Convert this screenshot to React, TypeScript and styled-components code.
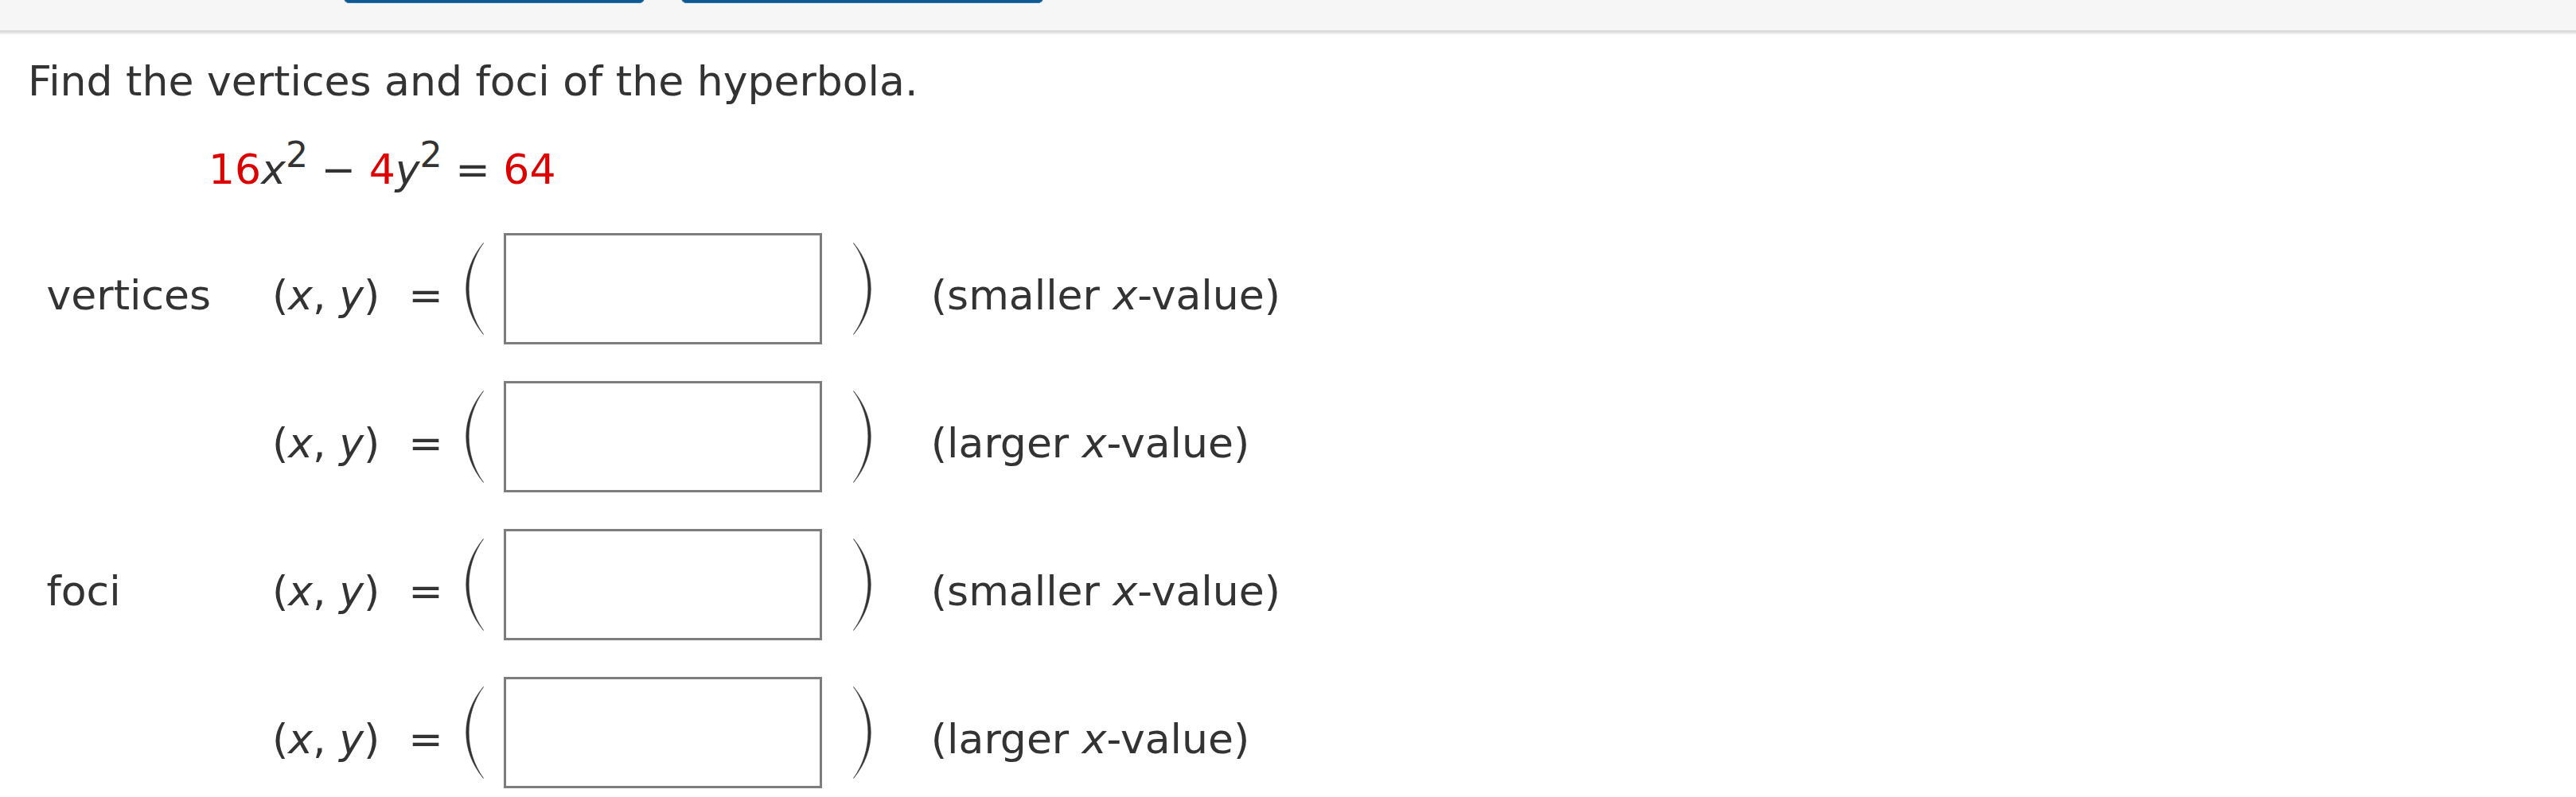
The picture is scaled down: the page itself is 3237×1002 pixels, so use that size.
import { FC } from "react";
import styled, { createGlobalStyle } from "styled-components";

const GlobalStyle = createGlobalStyle`
  html, body {
    margin: 0;
    padding: 0;
    background: #ffffff;
  }
  body {
    font-family: "DejaVu Sans", Verdana, sans-serif;
    color: #333333;
  }
`;

const TopBar = styled("div")`
  height: 38px;
  background: #f6f6f6;
  border-bottom: 3px solid #dcdcdc;
  box-shadow: 0 2px 0 #ececec;
  display: flex;
  align-items: flex-start;
  gap: 46px;
  padding-left: 432px;
  overflow: hidden;
`;

const TabButton = styled("div")<{ $w: number }>`
  width: ${({ $w }) => $w}px;
  height: 14px;
  margin-top: -10px;
  border-radius: 10px;
  background: #0d5a92;
  box-shadow: inset 0 -1px 0 #2f79b0;
`;

const Content = styled("div")`
  padding: 30px 0 0 35px;
  font-size: 52px;
  line-height: 62.4px;
`;

const Question = styled("p")`
  margin: 0;
`;

const Equation = styled("div")`
  margin: 48.6px 0 0 227px;
  white-space: pre;
`;

const Num = styled("span")`
  color: #dd0000;
`;

const Var = styled("i")`
  font-style: italic;
  color: #333333;
`;

const Sup = styled("sup")`
  font-size: 0.85em;
  line-height: 0;
  vertical-align: 21px;
`;

const Form = styled("div")`
  margin-top: 48.6px;
  display: flex;
  flex-direction: column;
  gap: 46px;
`;

const Row = styled("div")`
  display: flex;
  align-items: center;
  padding-left: 23.5px;
`;

const Label = styled("span")`
  width: 283.5px;
  padding-top: 16px;
`;

const Pair = styled("span")`
  padding-top: 16px;
  white-space: pre;
`;

const Equals = styled("span")`
  padding-top: 16px;
  margin: 0 27px 0 36px;
`;

const Paren = styled("svg")`
  width: 26px;
  height: 116px;
  flex: none;
`;

const AnswerBox = styled("input")`
  box-sizing: border-box;
  width: 400px;
  height: 140px;
  border: 3px solid #7d7d7d;
  border-radius: 0;
  background: #ffffff;
  padding: 0;
  margin: 0 37px 0 23px;
  flex: none;
`;

const Hint = styled("span")`
  padding-top: 16px;
  margin-left: 74px;
  white-space: pre;
`;

const LeftParen: FC = () => (
  <Paren viewBox="0 0 26 116">
    <path
      d="M23.5 0.5 C-5.5 35 -5.5 81 23.5 115.5 C-1 81 -1 35 23.5 0.5 Z"
      fill="#333333"
      stroke="#333333"
      strokeWidth="0.6"
      strokeLinejoin="round"
    />
  </Paren>
);

const RightParen: FC = () => (
  <Paren viewBox="0 0 26 116">
    <path
      d="M2.5 0.5 C31.5 35 31.5 81 2.5 115.5 C27 81 27 35 2.5 0.5 Z"
      fill="#333333"
      stroke="#333333"
      strokeWidth="0.6"
      strokeLinejoin="round"
    />
  </Paren>
);

const rows = [
  { label: "vertices", hint: "smaller" },
  { label: "", hint: "larger" },
  { label: "foci", hint: "smaller" },
  { label: "", hint: "larger" },
];

const App: FC = () => {
  return (
    <>
      <GlobalStyle />
      <TopBar>
        <TabButton $w={378} />
        <TabButton $w={455} />
      </TopBar>
      <Content>
        <Question>Find the vertices and foci of the hyperbola.</Question>
        <Equation>
          <Num>16</Num>
          <Var>x</Var>
          <Sup>2</Sup>
          {" − "}
          <Num>4</Num>
          <Var>y</Var>
          <Sup>2</Sup>
          {" = "}
          <Num>64</Num>
        </Equation>
        <Form>
          {rows.map((r, i) => (
            <Row key={i}>
              <Label>{r.label}</Label>
              <Pair>
                (<Var>x</Var>, <Var>y</Var>)
              </Pair>
              <Equals>=</Equals>
              <LeftParen />
              <AnswerBox type="text" />
              <RightParen />
              <Hint>
                ({r.hint} <Var>x</Var>-value)
              </Hint>
            </Row>
          ))}
        </Form>
      </Content>
    </>
  );
};

export default App;
